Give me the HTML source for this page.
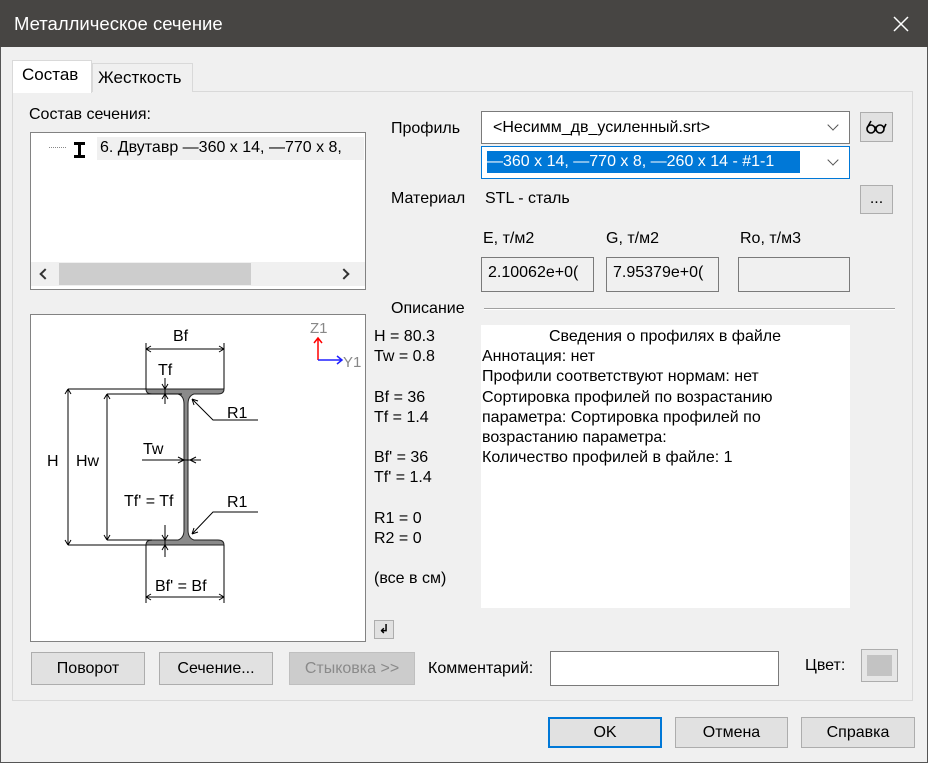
<!DOCTYPE html>
<html><head><meta charset="utf-8"><style>
*{box-sizing:border-box;margin:0;padding:0}
body{width:928px;height:763px;background:#f0f0f0;font-family:"Liberation Sans",sans-serif;font-size:16px;color:#000;position:relative;overflow:hidden}
.a{position:absolute;white-space:nowrap}
.title{left:0;top:0;width:928px;height:47px;background:#474543}
.btn{position:absolute;background:#e1e1e1;border:1px solid #adadad;text-align:center;font-size:16px}
.box{position:absolute;background:#fff;border:1px solid #7a7a7a}
.fld{position:absolute;background:#f0f0f0;border:1px solid #7a7a7a;font-size:16px;padding:6px 0 0 6px;overflow:hidden;white-space:nowrap}
.chev{position:absolute;width:8px;height:8px;border-right:1.5px solid #555;border-bottom:1.5px solid #555;transform:rotate(45deg)}
</style></head><body>
<div class="a title"></div>
<div class="a" style="left:0;top:47px;width:1px;height:716px;background:#555"></div>
<div class="a" style="left:927px;top:47px;width:1px;height:716px;background:#555"></div>
<div class="a" style="left:0;top:762px;width:928px;height:1px;background:#555"></div>
<div class="a" style="left:14px;top:13px;color:#fff;font-size:18.5px">Металлическое сечение</div>
<svg class="a" style="left:893px;top:16px" width="16" height="16"><path d="M1 1L15 15M15 1L1 15" stroke="#fff" stroke-width="1.5"/></svg>

<div class="a" style="left:12px;top:91px;width:901px;height:610px;border:1px solid #d9d9d9;background:#f0f0f0"></div>
<div class="a" style="left:92px;top:63px;width:101px;height:29px;border:1px solid #d9d9d9;border-bottom:none;background:#f0f0f0"></div>
<div class="a" style="left:98px;top:68px;font-size:17px">Жесткость</div>
<div class="a" style="left:12px;top:60px;width:80px;height:33px;border:1px solid #d9d9d9;border-bottom:none;background:#fff"></div>
<div class="a" style="left:22px;top:65px;font-size:17px">Состав</div>
<div class="a" style="left:18px;top:93px;width:893px;height:606px;background:#f0f0f0"></div>

<div class="a" style="left:29px;top:106px">Состав сечения:</div>
<div class="box" style="left:30px;top:132px;width:336px;height:158px;border-color:#828282"></div>
<div class="a" style="left:49px;top:147px;width:17px;border-top:1px dotted #888"></div>
<svg class="a" style="left:73px;top:141px" width="14" height="18"><path d="M1 1H12V4H8V14H12V17H1V14H5V4H1Z" fill="#000"/></svg>
<div class="a" style="left:97px;top:137px;width:267px;height:23px;background:#f0f0f0"></div>
<div class="a" style="left:100px;top:139px">6. Двутавр —360 x 14, —770 x 8,</div>
<div class="a" style="left:31px;top:262px;width:334px;height:24px;background:#f0f0f0"></div>
<div class="a" style="left:59px;top:263px;width:192px;height:22px;background:#cdcdcd"></div>
<div class="chev" style="left:41px;top:270px;transform:rotate(135deg);border-width:2px;border-color:#333"></div>
<div class="chev" style="left:340px;top:270px;transform:rotate(-45deg);border-width:2px;border-color:#333"></div>

<div class="box" style="left:30px;top:314px;width:336px;height:328px;border-color:#828282"></div>
<svg class="a" style="left:0;top:0" width="400" height="660" font-family="Liberation Sans" font-size="16">
<path d="M146 389 Q146 394 152 394 L178 394 Q184 396 184 404 L184 530 Q184 538 178 540 L152 540 Q146 540 146 545 L224 545 Q224 540 218 540 L194 540 Q188 538 188 530 L188 404 Q188 396 194 394 L218 394 Q224 394 224 389 Z" fill="#8a8a8a" stroke="#222" stroke-width="1"/>
<g stroke="#000" stroke-width="1" fill="none">
<path d="M146 343V389M224 343V389M146 349H224M146 349l5-3M146 349l5 3M224 349l-5-3M224 349l-5 3"/>
<path d="M68 389H146M68 545H146M68 389V545M68 389l-3 5M68 389l3 5M68 545l-3-5M68 545l3-5"/>
<path d="M107 394H182M107 540H152M107 394V540M107 394l-3 5M107 394l3 5M107 540l-3-5M107 540l3-5"/>
<path d="M165 378V404M162 384l3 5 3-5M162 399l3-5 3 5"/>
<path d="M165 525V557M162 535l3 5 3-5M162 550l3-5 3 5"/>
<path d="M142 460H201M178 457l6 3-6 3M196 457l-6 3 6 3"/>
<path d="M192 399L213 420H258M192 399l2 6M192 399l6 2"/>
<path d="M192 534L213 512H258M192 534l2-6M192 534l6-2"/>
<path d="M146 545V603M224 545V603M146 597H224M146 597l5-3M146 597l5 3M224 597l-5-3M224 597l-5 3"/>
</g>
<text x="173" y="341">Bf</text><text x="158" y="375">Tf</text>
<text x="227" y="418">R1</text><text x="227" y="507">R1</text>
<text x="47" y="466">H</text><text x="76" y="466">Hw</text>
<text x="143" y="454">Tw</text><text x="124" y="506">Tf' = Tf</text>
<text x="155" y="591">Bf' =  Bf</text>
<path d="M318 360V338M314 343l4-5 4 5" stroke="red" stroke-width="1.5" fill="none"/>
<path d="M318 360H342M337 356l5 4-5 4" stroke="#2020ff" stroke-width="1.5" fill="none"/>
<text x="310" y="333" fill="#888" font-size="15">Z1</text><text x="343" y="367" fill="#888" font-size="15">Y1</text>
</svg>

<div class="a" style="left:391px;top:120px">Профиль</div>
<div class="box" style="left:481px;top:111px;width:369px;height:33px;border-color:#7a7a7a"></div>
<div class="a" style="left:493px;top:119px">&lt;Несимм_дв_усиленный.srt&gt;</div>
<div class="chev" style="left:829px;top:121px"></div>
<div class="box" style="left:481px;top:146px;width:369px;height:33px;border-color:#0078d7"></div>
<div class="a" style="left:487px;top:151px;width:313px;height:22px;background:#0078d7"></div>
<div class="a" style="left:487px;top:153px;color:#fff">—360 x 14, —770 x 8, —260 x 14 - #1-1</div>
<div class="chev" style="left:829px;top:156px"></div>
<div class="btn" style="left:860px;top:112px;width:33px;height:30px"></div>
<svg class="a" style="left:865px;top:118px" width="24" height="18"><g fill="none" stroke="#000" stroke-width="1.6"><circle cx="6" cy="11" r="4"/><circle cx="15" cy="11" r="4"/><path d="M10 10Q10.5 8 11 10M2 10L6 3M19 10L21 6"/></g></svg>
<div class="a" style="left:391px;top:190px">Материал</div>
<div class="a" style="left:485px;top:190px">STL - сталь</div>
<div class="btn" style="left:860px;top:185px;width:33px;height:29px;padding-top:4px">...</div>
<div class="a" style="left:483px;top:230px">E, т/м2</div>
<div class="a" style="left:606px;top:230px">G, т/м2</div>
<div class="a" style="left:740px;top:230px">Ro, т/м3</div>
<div class="fld" style="left:481px;top:257px;width:113px;height:35px">2.10062e+0(</div>
<div class="fld" style="left:606px;top:257px;width:113px;height:35px">7.95379e+0(</div>
<div class="fld" style="left:738px;top:257px;width:112px;height:35px"></div>
<div class="a" style="left:391px;top:300px">Описание</div>
<div class="a" style="left:484px;top:308px;width:411px;height:2px;border-top:1px solid #a0a0a0;border-bottom:1px solid #fff"></div>
<div class="a" style="left:374px;top:327px;line-height:20.2px">H = 80.3<br>Tw = 0.8<br><br>Bf = 36<br>Tf = 1.4<br><br>Bf' = 36<br>Tf' = 1.4<br><br>R1 = 0<br>R2 = 0<br><br>(все в см)</div>
<div class="a" style="left:481px;top:325px;width:369px;height:283px;background:#fff"></div>
<div class="a" style="left:482px;top:327px;width:366px;line-height:20.2px"><div style="text-align:center">Сведения о профилях в файле</div>Аннотация: нет<br>Профили соответствуют нормам: нет<br>Сортировка профилей по возрастанию<br>параметра: Сортировка профилей по<br>возрастанию параметра:<br>Количество профилей в файле: 1</div>
<div class="btn" style="left:374px;top:620px;width:20px;height:19px;font-size:12px;font-weight:bold;padding-top:1px">↲</div>

<div class="btn" style="left:31px;top:652px;width:114px;height:33px;padding-top:7px">Поворот</div>
<div class="btn" style="left:159px;top:652px;width:114px;height:33px;padding-top:7px">Сечение...</div>
<div class="btn" style="left:289px;top:652px;width:126px;height:33px;padding-top:7px;background:#cccccc;border-color:#bfbfbf;color:#8a8a8a">Стыковка &gt;&gt;</div>
<div class="a" style="left:428px;top:660px">Комментарий:</div>
<div class="box" style="left:550px;top:651px;width:229px;height:35px"></div>
<div class="a" style="left:805px;top:657px">Цвет:</div>
<div class="btn" style="left:861px;top:649px;width:37px;height:33px;background:#e6e6e6"><div style="margin:5px;height:21px;background:#c3c3c3"></div></div>

<div class="btn" style="left:548px;top:717px;width:114px;height:31px;border:2px solid #0078d7;padding-top:5px">OK</div>
<div class="btn" style="left:675px;top:717px;width:113px;height:31px;padding-top:6px">Отмена</div>
<div class="btn" style="left:801px;top:717px;width:114px;height:31px;padding-top:6px">Справка</div>
</body></html>
